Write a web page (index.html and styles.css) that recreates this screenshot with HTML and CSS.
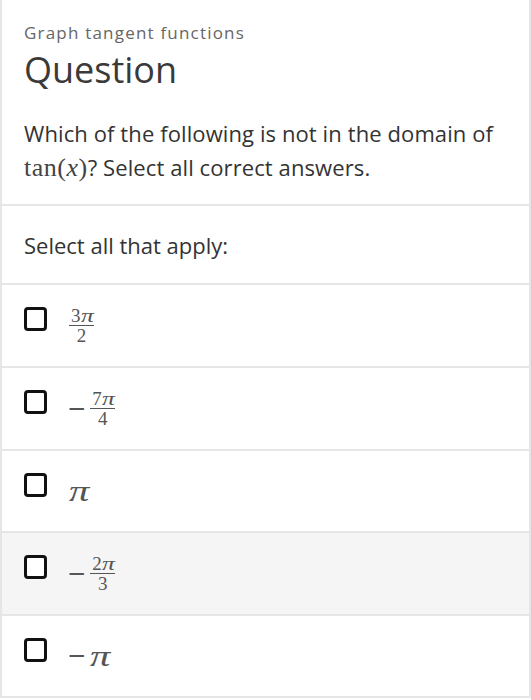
FILE: index.html
```html
<!DOCTYPE html>
<html>
<head>
<meta charset="utf-8">
<link rel="stylesheet" href="styles.css">
</head>
<body>
<div class="card">
  <div class="section header">
    <div class="topic">Graph tangent functions</div>
    <div class="title">Question</div>
    <div class="prompt">Which of the following is not in the domain of <span class="m">tan(<i>x</i>)</span>? Select all correct answers.</div>
  </div>
  <div class="section select">Select all that apply:</div>
  <div class="option">
    <span class="box"></span>
    <span class="math"><span class="frac"><span class="num">3<i class="pi">π</i></span><span class="den">2</span></span></span>
  </div>
  <div class="option">
    <span class="box"></span>
    <span class="math"><span class="minus">−</span><span class="frac"><span class="num">7<i class="pi">π</i></span><span class="den">4</span></span></span>
  </div>
  <div class="option">
    <span class="box"></span>
    <span class="math"><i class="pi">π</i></span>
  </div>
  <div class="option hover">
    <span class="box"></span>
    <span class="math"><span class="minus">−</span><span class="frac"><span class="num">2<i class="pi">π</i></span><span class="den">3</span></span></span>
  </div>
  <div class="option">
    <span class="box"></span>
    <span class="math"><span class="minus">−</span><i class="pi">π</i></span>
  </div>
</div>
</body>
</html>
```

FILE: styles.css
```css
html, body {
  margin: 0;
  padding: 0;
  background: #ffffff;
}
body {
  font-family: "Open Sans", "Liberation Sans", sans-serif;
  color: #333333;
}
.card {
  border-left: 2px solid #e6e6e6;
  border-right: 2px solid #e6e6e6;
  width: 531px;
  box-sizing: border-box;
}
.section {
  border-bottom: 2px solid #e6e6e6;
  padding: 0 22px;
}
.header {
  padding-top: 22px;
  padding-bottom: 19px;
}
.topic {
  font-size: 17px;
  line-height: 22px;
  letter-spacing: 1.2px;
  color: #666666;
}
.title {
  font-size: 36px;
  line-height: 44px;
  margin-top: 4px;
  color: #3a3a3a;
}
.prompt {
  margin-top: 24px;
  font-size: 22px;
  line-height: 34px;
  letter-spacing: 0.1px;
  color: #333333;
}
.m {
  font-family: "Liberation Serif", "DejaVu Serif", serif;
  font-size: 26px;
  letter-spacing: 0.5px;
  color: #444444;
}
.m i { font-style: italic; }
.select {
  font-size: 22px;
  line-height: 32px;
  padding-top: 23px;
  padding-bottom: 22px;
}
.option {
  display: flex;
  align-items: flex-start;
  gap: 22px;
  padding: 22px 22px;
  border-bottom: 2px solid #e6e6e6;
}
.option.hover {
  background: #f5f5f5;
}
.box {
  flex: none;
  width: 23px;
  height: 24px;
  box-sizing: border-box;
  border: 3px solid #111111;
  border-radius: 4px;
  background: #ffffff;
}
.math {
  display: flex;
  align-items: center;
  min-height: 36px;
  font-family: "Liberation Serif", "DejaVu Serif", serif;
  font-size: 30px;
  color: #555555;
}
.math i { font-style: italic; }
.pi {
  display: inline-block;
  transform: scaleX(1.35);
  transform-origin: left center;
  margin-right: 0.12em;
}
.minus {
  font-family: "DejaVu Sans", sans-serif;
  font-size: 23px;
  margin-right: 4px;
  margin-left: -2px;
  position: relative;
  top: -1px;
}
.frac {
  display: inline-flex;
  flex-direction: column;
  align-items: center;
  font-size: 19px;
}
.num {
  line-height: 17px;
  padding: 0 1px 1px 2px;
  border-bottom: 1px solid #555555;
}
.num .pi {
  margin-right: 0.15em;
}
.den {
  line-height: 17px;
  padding-top: 1px;
}
```
